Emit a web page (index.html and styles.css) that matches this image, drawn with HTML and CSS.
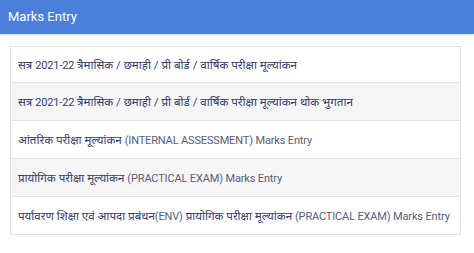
FILE: index.html
```html
<!DOCTYPE html>
<html lang="hi">
<head>
<meta charset="utf-8">
<title>Marks Entry</title>
<link rel="stylesheet" href="styles.css">
</head>
<body>
<header class="topbar">Marks Entry</header>
<main class="content">
  <ul class="menu">
    <li class="item"><a href="#">सत्र <span class="num">2021-22</span> त्रैमासिक / छमाही / प्री बोर्ड / वार्षिक परीक्षा मूल्यांकन</a></li>
    <li class="item alt"><a href="#">सत्र <span class="num">2021-22</span> त्रैमासिक / छमाही / प्री बोर्ड / वार्षिक परीक्षा मूल्यांकन थोक भुगतान</a></li>
    <li class="item"><a href="#">आंतरिक परीक्षा मूल्यांकन <span class="en">(INTERNAL ASSESSMENT) Marks Entry</span></a></li>
    <li class="item alt"><a href="#">प्रायोगिक परीक्षा मूल्यांकन <span class="en">(PRACTICAL EXAM) Marks Entry</span></a></li>
    <li class="item"><a href="#">पर्यावरण शिक्षा एवं आपदा प्रबंधन<span class="en">(ENV)</span> प्रायोगिक परीक्षा मूल्यांकन <span class="en">(PRACTICAL EXAM) Marks Entry</span></a></li>
  </ul>
</main>
</body>
</html>
```
FILE: styles.css
```css
* { box-sizing: border-box; }
html, body { margin: 0; padding: 0; background: #ffffff; }
body { font-family: Roboto, "Noto Sans", "Noto Sans Devanagari", sans-serif; }
.topbar {
  height: 34px;
  background: #4a7fdc;
  color: #ffffff;
  font-size: 13px;
  line-height: 34px;
  padding-left: 8px;
  box-shadow: 0 1px 2px rgba(0,0,0,0.12);
}
.content { padding: 12px 13px 0 10px; }
.menu {
  list-style: none;
  margin: 0;
  padding: 0;
  display: flex;
  flex-direction: column;
}
.item {
  border: 1px solid #e3e3e3;
  margin-top: -1px;
  background: #ffffff;
  height: 39px;
  display: flex;
  align-items: center;
  padding-left: 7px;
  font-size: 11.6px;
  white-space: nowrap;
  overflow: hidden;
  min-width: 0;
}
.item:first-child { margin-top: 0; height: 37px; }
.item.alt { background: #f6f6f6; }
.item a { color: #353b6a; text-decoration: none; }
.num { font-size: 11px; letter-spacing: -0.15px; }
.en { color: #55607a; font-size: 11px; letter-spacing: -0.15px; }
```
